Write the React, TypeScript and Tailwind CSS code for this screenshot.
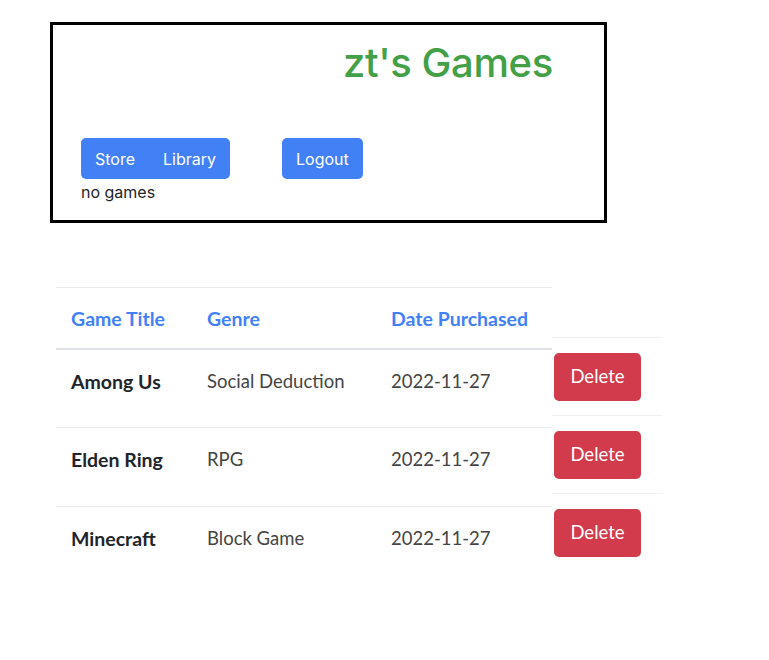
import React from 'react';

const games = [
    { title: 'Among Us', genre: 'Social Deduction', date: '2022-11-27' },
    { title: 'Elden Ring', genre: 'RPG', date: '2022-11-27' },
    { title: 'Minecraft', genre: 'Block Game', date: '2022-11-27' },
];

export default function App() {
    return (
        <div className="min-h-screen bg-white text-[#212529]">
            {/* Header box */}
            <div className="ml-[50px] mt-[22px] w-[557px] h-[201px] border-[3px] border-black font-['Inter',sans-serif]">
                <h1 className="ml-[290px] mt-[14px] text-[40px] leading-[48px] text-[#43a047] font-medium tracking-[-0.4px]">zt's Games</h1>
                <div className="mt-[51px] ml-[28px] flex items-center">
                    <div className="flex rounded-[5px] bg-[#4280f6] text-white text-[16px] leading-[24px]">
                        <button className="pl-[14px] pr-[14px] py-[8.5px]">Store</button>
                        <button className="pl-[14px] pr-[14px] py-[8.5px]">Library</button>
                    </div>
                    <button className="ml-[52px] rounded-[5px] bg-[#4280f6] text-white text-[16px] leading-[24px] px-[14px] py-[8.5px]">Logout</button>
                </div>
                <p className="ml-[28px] mt-[2px] text-[16px] leading-[22px] text-[#212529]">no games</p>
            </div>

            {/* Game table */}
            <div className="ml-[56px] mt-[64px] flex font-['Lato',sans-serif] text-[18.5px] leading-[27px]">
                <table className="w-[496px] table-fixed border-t border-[#e9ecef] border-collapse">
                    <thead>
                        <tr className="h-[61px] border-b-2 border-[#dee2e6] text-[19.5px]">
                            <th className="text-left pl-[15px] w-[151px] pt-[2px] font-bold text-[#4280f6]">Game Title</th>
                            <th className="text-left w-[184px] pt-[2px] font-bold text-[#4280f6]">Genre</th>
                            <th className="text-left pt-[2px] font-bold text-[#4280f6]">Date Purchased</th>
                        </tr>
                    </thead>
                    <tbody>
                        {games.map((g, i) => (
                            <tr key={g.title} className={`h-[79px] align-top ${i < games.length - 1 ? 'border-b border-[#e9ecef]' : ''}`}>
                                <td className="pl-[15px] pt-[18px] font-bold text-[19.5px] text-[#212529]">{g.title}</td>
                                <td className="pt-[18px] text-[#444]">{g.genre}</td>
                                <td className="pt-[18px] text-[#444]">{g.date}</td>
                            </tr>
                        ))}
                    </tbody>
                </table>
                <div className="w-[110px] pt-[50px]">
                    {games.map((g) => (
                        <div key={g.title} className="h-[78px] border-t border-[#eef0f2] pl-[2px] flex items-center">
                            <button className="w-[87px] h-[48px] rounded-[5px] bg-[#d13b4c] text-white text-[18.5px]">Delete</button>
                        </div>
                    ))}
                </div>
            </div>
        </div>
    );
}
